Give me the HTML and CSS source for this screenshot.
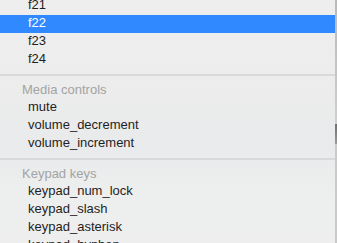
FILE: index.html
```html
<!DOCTYPE html>
<html>
<head>
<meta charset="utf-8">
<link rel="stylesheet" href="styles.css">
</head>
<body>
<div class="screen">
  <div class="menu">
    <div class="item">f21</div>
    <div class="item selected">f22</div>
    <div class="item">f23</div>
    <div class="item">f24</div>
    <div class="sep"><div class="line"></div></div>
    <div class="header">Media controls</div>
    <div class="item">mute</div>
    <div class="item">volume_decrement</div>
    <div class="item">volume_increment</div>
    <div class="sep"><div class="line"></div></div>
    <div class="header">Keypad keys</div>
    <div class="item">keypad_num_lock</div>
    <div class="item">keypad_slash</div>
    <div class="item">keypad_asterisk</div>
    <div class="item">keypad_hyphen</div>
  </div>
  <div class="edge">
    <div class="edge-a"></div>
    <div class="edge-dark"></div>
    <div class="edge-b"></div>
  </div>
</div>
</body>
</html>
```
FILE: styles.css
```css
html, body {
  margin: 0;
  padding: 0;
  width: 337px;
  height: 243px;
  overflow: hidden;
  background: #ededed;
}
.screen {
  display: flex;
  width: 337px;
  height: 243px;
  overflow: hidden;
}
.menu {
  flex: 1;
  margin-top: -3px;
  background: linear-gradient(180deg, #eeeeee 0%, #ededed 30%, #e9eaeb 60%, #edeeee 80%, #eeeeee 100%);
  font-family: "Liberation Sans", Arial, sans-serif;
  font-size: 13px;
  color: #1f1f1f;
}
.item {
  height: 15px;
  line-height: 15px;
  padding: 0 0 3px 28px;
  white-space: nowrap;
}
.item.selected {
  background: #3089fe;
  color: #ffffff;
}
.header {
  height: 15px;
  line-height: 15px;
  padding: 0 0 2px 22px;
  color: #a3a3a3;
  white-space: nowrap;
}
.sep {
  padding: 5px 0 6px 0;
}
.line {
  height: 2px;
  background: #d9d9d9;
}
.edge {
  width: 2px;
  display: flex;
  flex-direction: column;
  background: #c4c4c4;
}
.edge-a {
  height: 124px;
  background: linear-gradient(180deg, #b8b8b8 0%, #cfcfcf 100%);
}
.edge-dark {
  height: 20px;
  background: linear-gradient(180deg, #6f6f6f 0%, #9a9a9a 100%);
}
.edge-b {
  flex: 1;
  background: #cacaca;
}
```
